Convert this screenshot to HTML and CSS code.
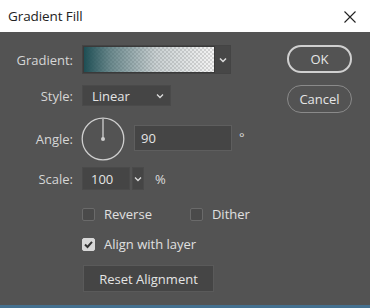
FILE: index.html
```html
<!DOCTYPE html>
<html>
<head>
<meta charset="utf-8">
<link rel="stylesheet" href="styles.css">
</head>
<body>
<div class="dialog">
  <div class="titlebar">
    <span class="title">Gradient Fill</span>
    <svg class="close" width="12" height="12" viewBox="0 0 12 12"><path d="M0.5 0.5 L11.5 11.5 M11.5 0.5 L0.5 11.5" stroke="#222" stroke-width="1.1" fill="none"/></svg>
  </div>
  <div class="body">
    <div class="form">
      <div class="row row-gradient">
        <label class="lbl">Gradient:</label>
        <div class="gradient-box">
          <div class="swatch"><div class="swatch-fill"></div></div>
          <div class="grad-drop"><svg width="8" height="6" viewBox="0 0 8 6"><path d="M1 1.5 L4 4.5 L7 1.5" stroke="#ddd" stroke-width="1.5" fill="none"/></svg></div>
        </div>
      </div>
      <div class="row row-style">
        <label class="lbl">Style:</label>
        <div class="select">
          <span>Linear</span>
          <svg width="8" height="6" viewBox="0 0 8 6"><path d="M1 1.5 L4 4.5 L7 1.5" stroke="#ddd" stroke-width="1.3" fill="none"/></svg>
        </div>
      </div>
      <div class="row row-angle">
        <label class="lbl">Angle:</label>
        <svg class="dial" width="44" height="44" viewBox="0 0 44 44">
          <circle cx="22" cy="22" r="20.8" stroke="#cfcfcf" stroke-width="1.3" fill="none"/>
          <line x1="22" y1="2" x2="22" y2="22" stroke="#cfcfcf" stroke-width="1.3"/>
          <circle cx="22" cy="22" r="2" fill="#cfcfcf"/>
        </svg>
        <div class="input angle-input">90</div>
        <span class="unit deg">°</span>
      </div>
      <div class="row row-scale">
        <label class="lbl">Scale:</label>
        <div class="input scale-input">100</div>
        <div class="scale-drop"><svg width="8" height="6" viewBox="0 0 8 6"><path d="M1 1.5 L4 4.5 L7 1.5" stroke="#ddd" stroke-width="1.3" fill="none"/></svg></div>
        <span class="unit pct">%</span>
      </div>
      <div class="row row-checks">
        <div class="check"><span class="box"></span><span>Reverse</span></div>
        <div class="check dither"><span class="box"></span><span>Dither</span></div>
      </div>
      <div class="row row-align">
        <div class="check"><span class="box checked"><svg width="13" height="13" viewBox="0 0 13 13"><path d="M3 6.5 L5.5 9 L10 3.8" stroke="#333" stroke-width="2" fill="none"/></svg></span><span>Align with layer</span></div>
      </div>
      <div class="row row-reset">
        <div class="btn-reset">Reset Alignment</div>
      </div>
    </div>
    <div class="buttons">
      <div class="btn ok">OK</div>
      <div class="btn cancel">Cancel</div>
    </div>
  </div>
  <div class="bottom-strip"></div>
</div>
</body>
</html>
```
FILE: styles.css
```css
* { box-sizing: border-box; }
html, body { margin: 0; padding: 0; }
body {
  width: 370px;
  height: 308px;
  overflow: hidden;
  font-family: "Open Sans", "Noto Sans", sans-serif;
}
.dialog {
  width: 370px;
  height: 308px;
  display: flex;
  flex-direction: column;
  background: #535353;
}
.titlebar {
  height: 32px;
  background: #ffffff;
  display: flex;
  align-items: center;
  justify-content: space-between;
  padding: 0 14px 0 8px;
}
.title {
  font-size: 13.5px;
  color: #222;
  letter-spacing: -0.1px;
}
.close { display: block; margin-top: 1px; }
.body {
  flex: 1;
  display: flex;
  padding: 13px 18px 0 0;
  color: #dcdcdc;
  font-size: 13px;
}
.form { flex: 1; display: flex; flex-direction: column; }
.row { display: flex; align-items: center; }
.lbl {
  width: 74px;
  text-align: right;
  padding-right: 1px;
  margin-right: 8px;
  color: #d6d6d6;
}
.gradient-box {
  display: flex;
  height: 29px;
  border: 1px solid #444;
  background: #404040;
}
.swatch {
  width: 132px;
  height: 27px;
  border: 1px solid #3a3a3a;
  background-color: #f4f4f4;
  background-image:
    linear-gradient(45deg, #d4d4d4 25%, transparent 25%, transparent 75%, #d4d4d4 75%),
    linear-gradient(45deg, #d4d4d4 25%, transparent 25%, transparent 75%, #d4d4d4 75%);
  background-size: 4px 4px;
  background-position: 0 0, 2px 2px;
}
.swatch-fill {
  width: 100%;
  height: 100%;
  background: linear-gradient(to right, rgba(30,78,84,1) 0%, rgba(60,100,105,0.75) 20%, rgba(120,140,145,0.35) 55%, rgba(255,255,255,0) 100%);
}
.grad-drop {
  width: 15px;
  display: flex;
  align-items: center;
  justify-content: center;
  background: #474747;
}
.row-style { margin-top: 11px; }
.select {
  width: 89px;
  height: 21px;
  background: #454545;
  border: 1px solid #4a4a4a;
  display: flex;
  align-items: center;
  justify-content: space-between;
  padding: 0 6px 0 9px;
  color: #e4e4e4;
}
.row-angle { margin-top: 11px; }
.dial { display: block; margin-left: -1px; }
.input {
  background: #454545;
  border: 1px solid #5e5e5e;
  color: #e4e4e4;
  display: flex;
  align-items: center;
  padding-left: 6px;
}
.angle-input {
  width: 98px;
  height: 26px;
  margin-left: 9px;
  margin-top: -2px;
}
.deg { margin-left: 7px; margin-top: -5px; font-size: 13px; }
.row-scale { margin-top: 6px; }
.scale-input {
  width: 48px;
  height: 23px;
  padding-left: 8px;
  border-color: #4a4a4a;
}
.scale-drop {
  width: 12px;
  height: 23px;
  margin-left: 2px;
  background: #454545;
  border: 1px solid #4a4a4a;
  display: flex;
  align-items: center;
  justify-content: center;
}
.pct { margin-left: 11px; }
.row-checks { margin-top: 15px; padding-left: 82px; }
.check {
  display: flex;
  align-items: center;
  color: #e0e0e0;
}
.box {
  width: 13px;
  height: 13px;
  border: 1px solid #6a6a6a;
  background: #4a4a4a;
  border-radius: 2px;
  margin-right: 9px;
  display: block;
}
.box.checked {
  background: #d8d8d8;
  border-color: #d8d8d8;
}
.box.checked svg { display: block; margin: -1px; }
.dither { margin-left: 38px; }
.row-align { margin-top: 12px; padding-left: 82px; }
.row-reset { margin-top: 12px; padding-left: 83px; }
.btn-reset {
  width: 131px;
  height: 27px;
  background: #454545;
  border: 1px solid #5a5a5a;
  display: flex;
  align-items: center;
  justify-content: center;
  color: #e4e4e4;
  font-size: 13px;
}
.buttons {
  display: flex;
  flex-direction: column;
  gap: 12px;
}
.btn {
  width: 65px;
  height: 28px;
  border-radius: 14px;
  display: flex;
  align-items: center;
  justify-content: center;
  color: #e6e6e6;
  font-size: 13px;
}
.ok { border: 2px solid #d0d0d0; }
.cancel { border: 1px solid #8a8a8a; }
.bottom-strip {
  height: 3px;
  background: #44708f;
}
```
